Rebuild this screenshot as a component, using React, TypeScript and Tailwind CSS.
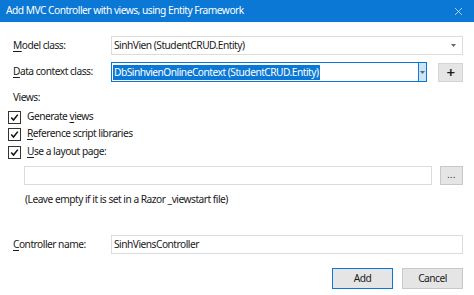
import { X } from "lucide-react";

const Mn = ({ c, rest }: { c: string; rest: string }) => (
  <span>
    <span className="underline underline-offset-2">{c}</span>
    {rest}
  </span>
);

const Check = () => (
  <div className="w-[13px] h-[13px] border border-[#333] bg-white flex items-center justify-center shrink-0">
    <svg width="9" height="9" viewBox="0 0 9 9">
      <path d="M1.2 4.6 L3.5 7 L7.8 1.6" fill="none" stroke="#111" strokeWidth="1.5" />
    </svg>
  </div>
);

const Arrow = () => (
  <svg width="5" height="3" viewBox="0 0 5 3">
    <path d="M0 0 L5 0 L2.5 3 Z" fill="#666" />
  </svg>
);

export default function App() {
  return (
    <div
      className="w-[474px] h-[295px] bg-white text-[#1a1a1a] text-[10.2px] tracking-[-0.5px] overflow-hidden flex flex-col"
      style={{ fontFamily: '"Noto Sans", "Open Sans", sans-serif' }}
    >
      <div className="h-[22px] shrink-0 bg-[#0a78d4] text-white flex items-center justify-between pl-[6px] pr-[9px]">
        <span>Add MVC Controller with views, using Entity Framework</span>
        <X size={13} strokeWidth={1.2} />
      </div>

      <div className="flex flex-col pl-[13px] pr-[11px]">
        <div className="flex items-center mt-[14px] h-[19px]">
          <div className="w-[98px]">
            <Mn c="M" rest="odel class:" />
          </div>
          <div className="flex-1 h-[19px] border border-[#dcdcdc] flex items-center justify-between pl-[2px] pr-[6px]">
            <span>SinhVien (StudentCRUD.Entity)</span>
            <Arrow />
          </div>
        </div>

        <div className="flex items-center mt-[7px] h-[20px]">
          <div className="w-[98px]">
            <Mn c="D" rest="ata context class:" />
          </div>
          <div className="w-[316px] h-[20px] border border-[#0a78d4] flex items-stretch">
            <div className="flex-1 flex items-center pl-[1px]">
              <span className="bg-[#0a78d4] text-white leading-[15px] px-[1px]">
                DbSinhvienOnlineContext (StudentCRUD.Entity)
              </span>
            </div>
            <div className="w-[8px] bg-[#cce4f7] border-l border-[#0a78d4] flex items-center justify-center">
              <Arrow />
            </div>
          </div>
          <div className="ml-[11px] w-[25px] h-[19px] bg-[#e5e5e5] border border-[#d4d4d4] flex items-center justify-center text-[15px] font-semibold leading-none">
            +
          </div>
        </div>

        <div className="mt-[7px] h-[16px] leading-[16px]">Views:</div>

        <div className="flex flex-col -ml-[5px]">
          <div className="flex items-center gap-[6px] h-[14px] mt-[5px]">
            <Check />
            <span>
              Generate <Mn c="v" rest="iews" />
            </span>
          </div>
          <div className="flex items-center gap-[6px] h-[14px] mt-[3px]">
            <Check />
            <Mn c="R" rest="eference script libraries" />
          </div>
          <div className="flex items-center gap-[6px] h-[14px] mt-[4px]">
            <Check />
            <Mn c="U" rest="se a layout page:" />
          </div>
        </div>

        <div className="flex items-center mt-[7px] pl-[11px] h-[19px]">
          <div className="w-[409px] h-[19px] border border-[#dcdcdc]" />
          <div className="ml-[8px] w-[23px] h-[19px] bg-[#e5e5e5] border border-[#c8c8c8] flex items-end justify-center pb-[5px] text-[9px] tracking-[0.5px] leading-none">
            ...
          </div>
        </div>

        <div className="mt-[6px] pl-[12px] h-[16px] leading-[16px]">
          (Leave empty if it is set in a Razor _viewstart file)
        </div>

        <div className="flex items-center mt-[28px] h-[19px]">
          <div className="w-[98px]">
            <Mn c="C" rest="ontroller name:" />
          </div>
          <div className="flex-1 h-[19px] border border-[#dcdcdc] flex items-center pl-[2px]">
            SinhViensController
          </div>
        </div>

        <div className="flex justify-end gap-[9px] mt-[14px]">
          <div className="w-[61px] h-[21px] bg-[#e5e5e5] border border-[#0a78d4] flex items-center justify-center">
            Add
          </div>
          <div className="w-[61px] h-[21px] bg-[#e5e5e5] border border-[#c8c8c8] flex items-center justify-center">
            Cancel
          </div>
        </div>
      </div>
    </div>
  );
}
